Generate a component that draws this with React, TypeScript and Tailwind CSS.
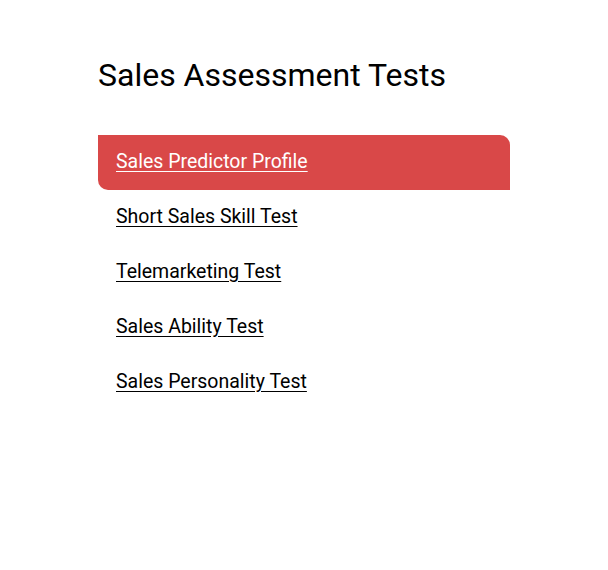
import React from "react";

const items = [
  "Sales Predictor Profile",
  "Short Sales Skill Test",
  "Telemarketing Test",
  "Sales Ability Test",
  "Sales Personality Test",
];

export default function App() {
  return (
    <div className="w-[608px] h-[570px] bg-white pl-[98px] pt-[56px]" style={{ fontFamily: "Roboto, sans-serif" }}>
      <h1 className="text-[32px] leading-[38px] text-black font-normal">Sales Assessment Tests</h1>
      <ul className="mt-[41px] w-[412px]">
        {items.map((t, i) => (
          <li
            key={t}
            className={
              i === 0
                ? "h-[55px] flex items-center pl-[18px] pb-[2px] bg-[#d94848] rounded-tr-[10px] rounded-bl-[10px]"
                : "h-[55px] flex items-center pl-[18px] pb-[2px]"
            }
          >
            <a
              href="#"
              className={
                (i === 0 ? "text-white " : "text-black ") +
                "text-[19.5px] underline underline-offset-[3px]"
              }
            >
              {t}
            </a>
          </li>
        ))}
      </ul>
    </div>
  );
}
